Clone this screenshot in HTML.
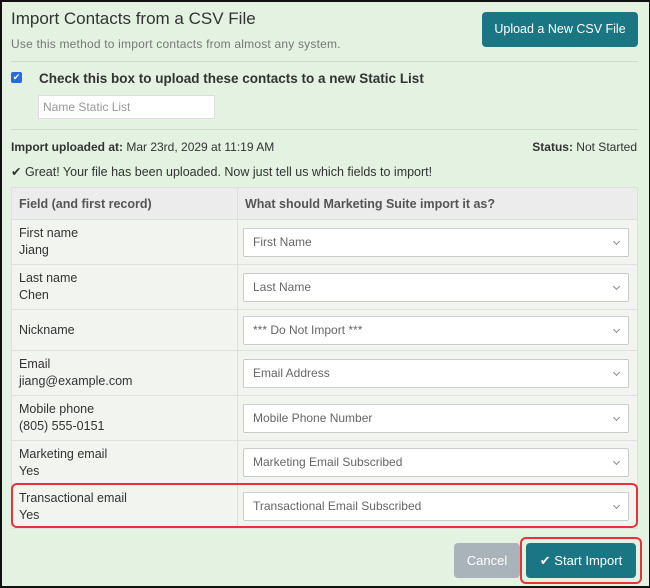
<!DOCTYPE html>
<html><head><style>
*{box-sizing:border-box;margin:0;padding:0}
body{width:650px;height:588px;background:#e3f2e1;font-family:"Liberation Sans",sans-serif;color:#333;position:relative;overflow:hidden}
.frame{position:absolute;left:0;top:0;width:650px;height:588px;border:2px solid #111;border-right-width:1px}
.abs{position:absolute}
h1{position:absolute;left:11px;top:9px;font-size:17px;font-weight:normal;color:#333}
.sub{left:11px;top:37px;font-size:12px;color:#777;letter-spacing:0.2px}
.btn{position:absolute;background:#1b7684;color:#fff;border-radius:4px;font-size:13px;text-align:center}
.hr{position:absolute;left:11px;width:627px;height:1px;background:#c9e0c6}
table{position:absolute;left:11px;top:187px;width:627px;border-collapse:collapse;font-size:12.5px}
td,th{border:1px solid #e0e0e0;padding:0 7px;text-align:left;vertical-align:middle}
th{background:#ececec;height:32px;color:#555;font-size:12.5px}
td{background:#f2f4f0}
td.s{padding:0 8px 0 5px}
td.f{width:226px;line-height:17px;color:#333}
.sel{height:29px;background:#fff;border:1px solid #ccc;border-radius:2px;font-size:12px;color:#666;line-height:27px;padding-left:9px;position:relative}
.sel:after{content:"";position:absolute;right:9px;top:10px;width:4px;height:4px;border-right:1px solid #888;border-bottom:1px solid #888;transform:rotate(45deg)}
.red{position:absolute;border:2px solid #e8323a;border-radius:6px}
</style></head><body>
<h1>Import Contacts from a CSV File</h1>
<div class="abs sub">Use this method to import contacts from almost any system.</div>
<div class="btn" style="left:482px;top:12px;width:156px;height:35px;line-height:35px;font-size:12.5px">Upload a New CSV File</div>
<div class="hr" style="top:61px"></div>
<div class="abs" style="left:11px;top:72px;width:11px;height:11px;background:#2a6ae0;border-radius:2px;color:#fff;font-size:9px;line-height:11px;text-align:center">✔</div>
<div class="abs" style="left:39px;top:71px;font-size:13.5px;font-weight:bold;color:#333">Check this box to upload these contacts to a new Static List</div>
<div class="abs" style="left:38px;top:95px;width:177px;height:24px;background:#fff;border:1px solid #ddd;font-size:12px;color:#999;line-height:22px;padding-left:4px">Name Static List</div>
<div class="hr" style="top:129px"></div>
<div class="abs" style="left:11px;top:140px;font-size:12px"><b>Import uploaded at:</b> Mar 23rd, 2029 at 11:19 AM</div>
<div class="abs" style="right:13px;top:140px;font-size:12px"><b>Status:</b> Not Started</div>
<div class="abs" style="left:11px;top:164px;font-size:12.5px">✔ Great! Your file has been uploaded. Now just tell us which fields to import!</div>
<table>
<tr><th>Field (and first record)</th><th>What should Marketing Suite import it as?</th></tr>
<tr style="height:45px"><td class="f">First name<br>Jiang</td><td class="s"><div class="sel">First Name</div></td></tr>
<tr style="height:45px"><td class="f">Last name<br>Chen</td><td class="s"><div class="sel">Last Name</div></td></tr>
<tr style="height:41px"><td class="f">Nickname</td><td class="s"><div class="sel">*** Do Not Import ***</div></td></tr>
<tr style="height:45px"><td class="f">Email<br>jiang@example.com</td><td class="s"><div class="sel">Email Address</div></td></tr>
<tr style="height:45px"><td class="f">Mobile phone<br>(805) 555-0151</td><td class="s"><div class="sel">Mobile Phone Number</div></td></tr>
<tr style="height:44px"><td class="f">Marketing email<br>Yes</td><td class="s"><div class="sel">Marketing Email Subscribed</div></td></tr>
<tr style="height:44px"><td class="f">Transactional email<br>Yes</td><td class="s"><div class="sel">Transactional Email Subscribed</div></td></tr>
</table>
<div class="red" style="left:11px;top:483px;width:627px;height:45px"></div>
<div class="btn" style="left:454px;top:543px;width:66px;height:35px;line-height:35px;background:#a9b3ba">Cancel</div>
<div class="btn" style="left:526px;top:543px;width:110px;height:35px;line-height:35px">✔ Start Import</div>
<div class="red" style="left:520px;top:537px;width:122px;height:47px"></div>
<div class="frame"></div>
</body></html>
